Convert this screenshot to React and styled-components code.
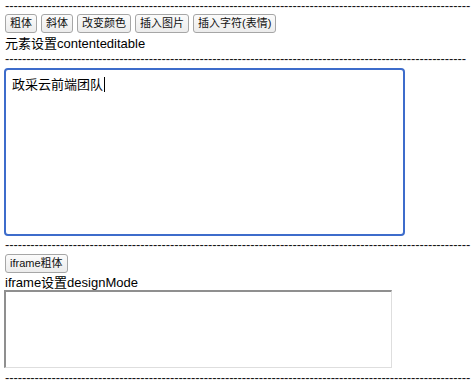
import React from 'react';
import styled, { createGlobalStyle } from 'styled-components';

//#region styled-components
const GlobalStyle = createGlobalStyle`
    html, body {
        margin: 0;
        padding: 0;
        background: #fff;
        overflow: hidden;
    }
    body {
        font-family: 'Liberation Sans', 'Noto Sans CJK SC', sans-serif;
        color: #000;
    }
`;

const Page = styled.div`
    display: flex;
    flex-direction: column;
    align-items: flex-start;
    width: 474px;
    height: 384px;
    padding: 1px 0 0 4px;
    box-sizing: border-box;
    overflow: hidden;
`;

const Divider = styled.div`
    height: 12px;
    margin-top: ${(props) => props.$gap || 0}px;
    padding-left: 1px;

    font-size: 13px;
    line-height: 12px;
    color: #111;
    white-space: nowrap;
    letter-spacing: -0.1px;
`;

const Toolbar = styled.div`
    display: flex;
    gap: 4px;
    margin-top: ${(props) => props.$gap || 0}px;
    padding-left: 1px;
`;

const Button = styled.button`
    height: 19px;
    padding: 0 4px;

    font-family: 'Liberation Sans', 'Noto Sans CJK SC', sans-serif;
    font-size: 11px;
    line-height: 17px;
    color: #111;
    background: linear-gradient(#fbfbfb, #ececec);
    border: 1px solid #a6a6a6;
    border-radius: 3px;
    cursor: pointer;
`;

const Label = styled.div`
    margin-top: ${(props) => props.$gap || 0}px;
    padding-left: 1px;

    font-size: 13px;
    line-height: ${(props) => props.$lh || 16}px;
`;

const Editor = styled.div`
    width: 401px;
    height: 169px;
    margin-top: 3px;
    padding: 7px 6px;
    box-sizing: border-box;

    font-size: 13px;
    line-height: 16px;
    border: 2px solid #3d6ccb;
    border-radius: 4px;
    outline: none;
`;

const Caret = styled.span`
    display: inline-block;
    width: 1px;
    height: 15px;
    margin-left: 1px;
    vertical-align: -3px;
    background: #000;
`;

const FrameBox = styled.div`
    width: 388px;
    height: 78px;
    box-sizing: border-box;

    background: #fff;
    border-style: solid;
    border-width: 2px 1px 1px 2px;
    border-color: #8f8f8f #dedede #dedede #8f8f8f;
`;
//#endregion

const dashes = (n) => '-'.repeat(n);

const toolbarButtons = ['粗体', '斜体', '改变颜色', '插入图片', '插入字符(表情)'];

export default function App() {
    return (
        <>
            <GlobalStyle />
            <Page>
                <Divider $gap={-1}>{dashes(110)}</Divider>
                <Toolbar $gap={2}>
                    {toolbarButtons.map((text) => (
                        <Button key={text}>{text}</Button>
                    ))}
                </Toolbar>
                <Label $gap={3}>元素设置contenteditable</Label>
                <Divider $gap={1}>{dashes(109)}</Divider>
                <Editor>
                    政采云前端团队
                    <Caret />
                </Editor>
                <Divider $gap={3}>{dashes(110)}</Divider>
                <Toolbar $gap={3}>
                    <Button>iframe粗体</Button>
                </Toolbar>
                <Label $gap={2} $lh={15}>
                    iframe设置designMode
                </Label>
                <FrameBox />
                <Divider $gap={4}>{dashes(110)}</Divider>
            </Page>
        </>
    );
}
